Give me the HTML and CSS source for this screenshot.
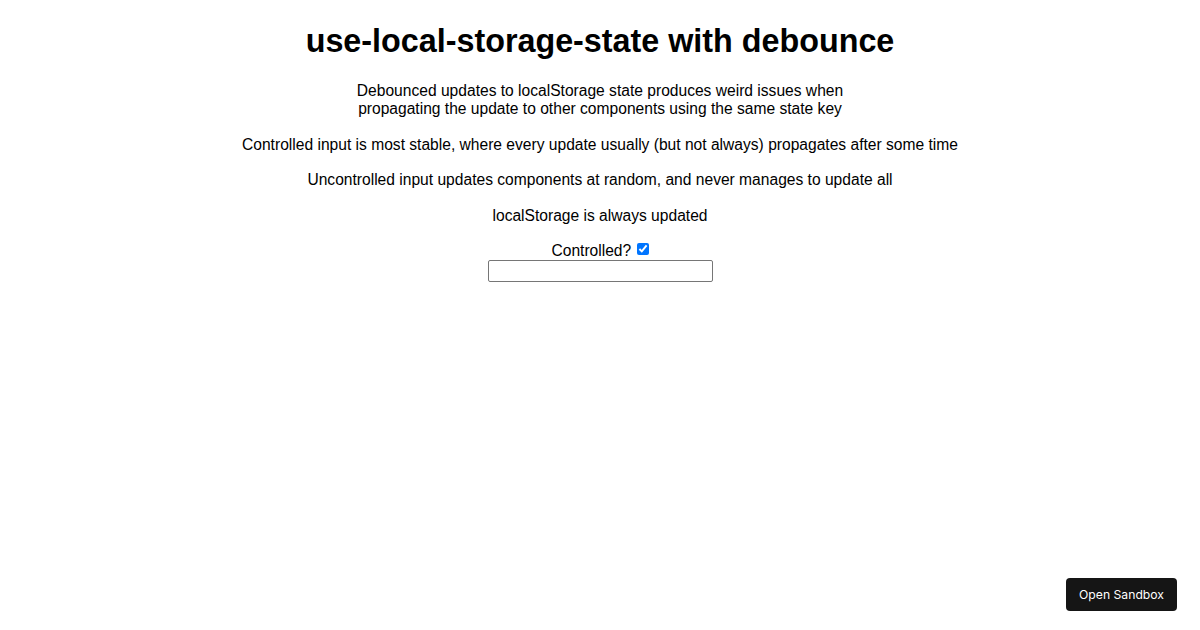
FILE: index.html
```html
<!DOCTYPE html>
<html>
<head>
    <title>use-local-storage-state with debounce</title>
    <link rel="stylesheet" href="styles.css">
</head>
<body>
    <div class="App">
        <h1>use-local-storage-state with debounce</h1>
        <p>
            Debounced updates to localStorage state produces weird issues when
            <br>
            propagating the update to other components using the same state key
        </p>
        <p>Controlled input is most stable, where every update usually (but not always) propagates after some time</p>
        <p>Uncontrolled input updates components at random, and never manages to update all</p>
        <p>localStorage is always updated</p>
        <div class="controls">
            <label class="toggle">Controlled? <input type="checkbox" checked></label>
            <br>
            <input class="field" type="text">
        </div>
    </div>
    <a class="open-sandbox" href="#">Open Sandbox</a>
</body>
</html>
```

FILE: styles.css
```css
body {
    font-family: "Liberation Sans", Arial, sans-serif;
    margin: 8px;
}

.App {
    text-align: center;
}

h1 {
    margin: 15px 0 22px;
    font-size: 32.3px;
}

p {
    font-size: 15.6px;
    line-height: 18px;
    margin: 17.5px 0;
}

.toggle {
    font-size: 15.6px;
}

.toggle input {
    margin: 0 0 0 1px;
    width: 12px;
    height: 12px;
    vertical-align: 1px;
}

.field {
    width: 225px;
    height: 22px;
    box-sizing: border-box;
    margin-top: 0;
    border: 1px solid #767676;
    border-radius: 2px;
}

.open-sandbox {
    position: fixed;
    right: 23px;
    bottom: 19px;
    padding: 0 13px;
    height: 33px;
    line-height: 33px;
    background-color: #151515;
    color: #fff;
    border-radius: 4px;
    font-family: Inter, "Liberation Sans", sans-serif;
    font-size: 12.2px;
    text-decoration: none;
}
```
